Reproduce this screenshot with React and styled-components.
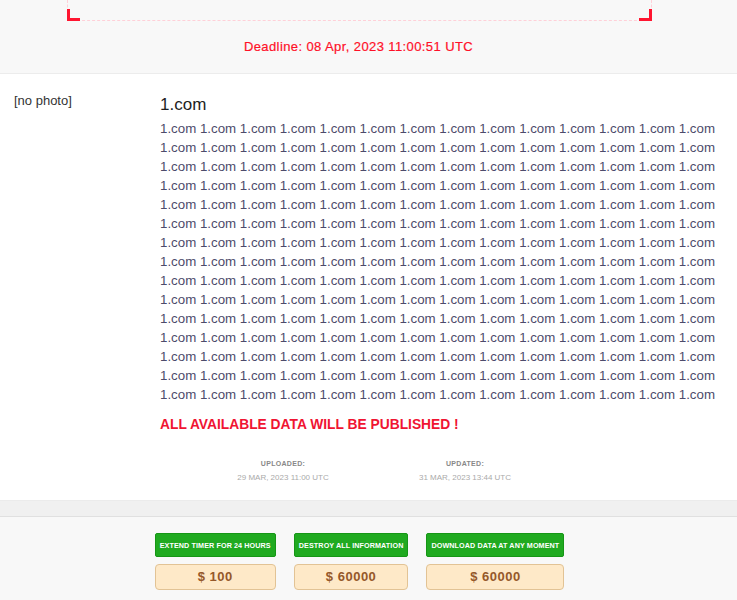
import styled, { createGlobalStyle } from "styled-components";

const GlobalStyle = createGlobalStyle`
  body {
    margin: 0;
    background: #f8f8f8;
    font-family: "Liberation Sans", Arial, sans-serif;
  }
`;

const offers = [
  { label: "Extend timer for 24 hours", price: "$ 100" },
  { label: "Destroy all information", price: "$ 60000" },
  { label: "Download data at any moment", price: "$ 60000" },
];

const words = Array(210).fill("1.com").join(" ");

const App = () => {
  return (
    <Page>
      <GlobalStyle />
      <Header>
        <Frame>
          <Corner $side="left" />
          <Corner $side="right" />
        </Frame>
        <Deadline>Deadline: 08 Apr, 2023 11:00:51 UTC</Deadline>
      </Header>

      <Main>
        <Photo>[no photo]</Photo>
        <Content>
          <Title>1.com</Title>
          <Body>{words}</Body>
          <Warning>ALL AVAILABLE DATA WILL BE PUBLISHED !</Warning>
          <Meta>
            <MetaItem>
              <MetaLabel>Uploaded:</MetaLabel>
              <MetaValue>29 Mar, 2023 11:00 UTC</MetaValue>
            </MetaItem>
            <MetaItem>
              <MetaLabel>Updated:</MetaLabel>
              <MetaValue>31 Mar, 2023 13:44 UTC</MetaValue>
            </MetaItem>
          </Meta>
        </Content>
      </Main>

      <Band />

      <Footer>
        {offers.map((item) => (
          <Offer key={item.label}>
            <BuyButton>{item.label}</BuyButton>
            <Price>{item.price}</Price>
          </Offer>
        ))}
      </Footer>
    </Page>
  );
};
export default App;

const Page = styled.div`
  min-height: 600px;
  background: #f8f8f8;
`;

const Header = styled.header`
  height: 73px;
  background: #f8f8f8;
  border-bottom: 1px solid #ececec;
  box-shadow: 0 1px 3px rgba(0, 0, 0, 0.05);
`;

const Frame = styled.div`
  position: relative;
  margin-left: 67px;
  width: 583px;
  height: 20px;
  border: 1px dashed #ffd0d8;
  border-top: none;
`;

const Corner = styled.span`
  position: absolute;
  bottom: -1px;
  ${(p) => (p.$side === "left" ? "left: -1px;" : "right: -1px;")}
  width: 10px;
  height: 9px;
  border-bottom: 3px solid #ff1530;
  ${(p) =>
    p.$side === "left"
      ? "border-left: 3px solid #ff1530;"
      : "border-right: 3px solid #ff1530;"}
`;

const Deadline = styled.div`
  margin-top: 19px;
  padding-right: 20px;
  text-align: center;
  color: #ff1028;
  font-size: 13px;
  line-height: 14px;
  letter-spacing: 0.4px;
  -webkit-text-stroke: 0.2px #ff1028;
`;

const Main = styled.main`
  display: grid;
  grid-template-columns: 160px 1fr;
  height: 426px;
  background: #fff;
`;

const Photo = styled.div`
  padding: 20px 0 0 14px;
  font-size: 13px;
  line-height: 14px;
  color: #333;
`;

const Content = styled.div`
  padding: 21px 16px 0 0;
`;

const Title = styled.h1`
  margin: 0;
  font-size: 17px;
  font-weight: normal;
  line-height: 20px;
  color: #1e1e1e;
`;

const Body = styled.p`
  margin: 4px 0 0;
  font-size: 13.3px;
  line-height: 19px;
  color: #4d4b6b;
`;

const Warning = styled.h2`
  margin: 13px 0 0;
  font-size: 13.8px;
  line-height: 16px;
  font-weight: bold;
  color: #f01432;
`;

const Meta = styled.div`
  display: flex;
  margin: 26px 0 0 32px;
`;

const MetaItem = styled.div`
  width: 182px;
  text-align: center;
  text-transform: uppercase;
`;

const MetaLabel = styled.div`
  font-size: 7px;
  line-height: 10px;
  font-weight: bold;
  color: #888;
  letter-spacing: 0.3px;
`;

const MetaValue = styled.div`
  margin-top: 4px;
  font-size: 8px;
  line-height: 10px;
  color: #aaa;
`;

const Band = styled.div`
  height: 15px;
  background: #f0f0f0;
  border-top: 1px solid #ebebeb;
  border-bottom: 1px solid #e0e0e0;
`;

const Footer = styled.footer`
  display: flex;
  justify-content: center;
  gap: 18px;
  padding: 16px 18px 0 0;
`;

const Offer = styled.div`
  display: flex;
  flex-direction: column;
  gap: 7px;
`;

const BuyButton = styled.button`
  height: 24px;
  padding: 0 4px;
  border: 1px solid #169616;
  border-radius: 2px;
  background: #20aa20;
  color: #fff;
  font-family: "Liberation Sans", Arial, sans-serif;
  font-size: 7.2px;
  font-weight: bold;
  text-transform: uppercase;
  letter-spacing: 0.1px;
  white-space: nowrap;
  cursor: pointer;
`;

const Price = styled.div`
  height: 24px;
  border: 1px solid #e2c395;
  border-radius: 4px;
  background: #fee9c8;
  color: #95582a;
  font-size: 13px;
  font-weight: bold;
  line-height: 24px;
  text-align: center;
  letter-spacing: 0.5px;
`;
